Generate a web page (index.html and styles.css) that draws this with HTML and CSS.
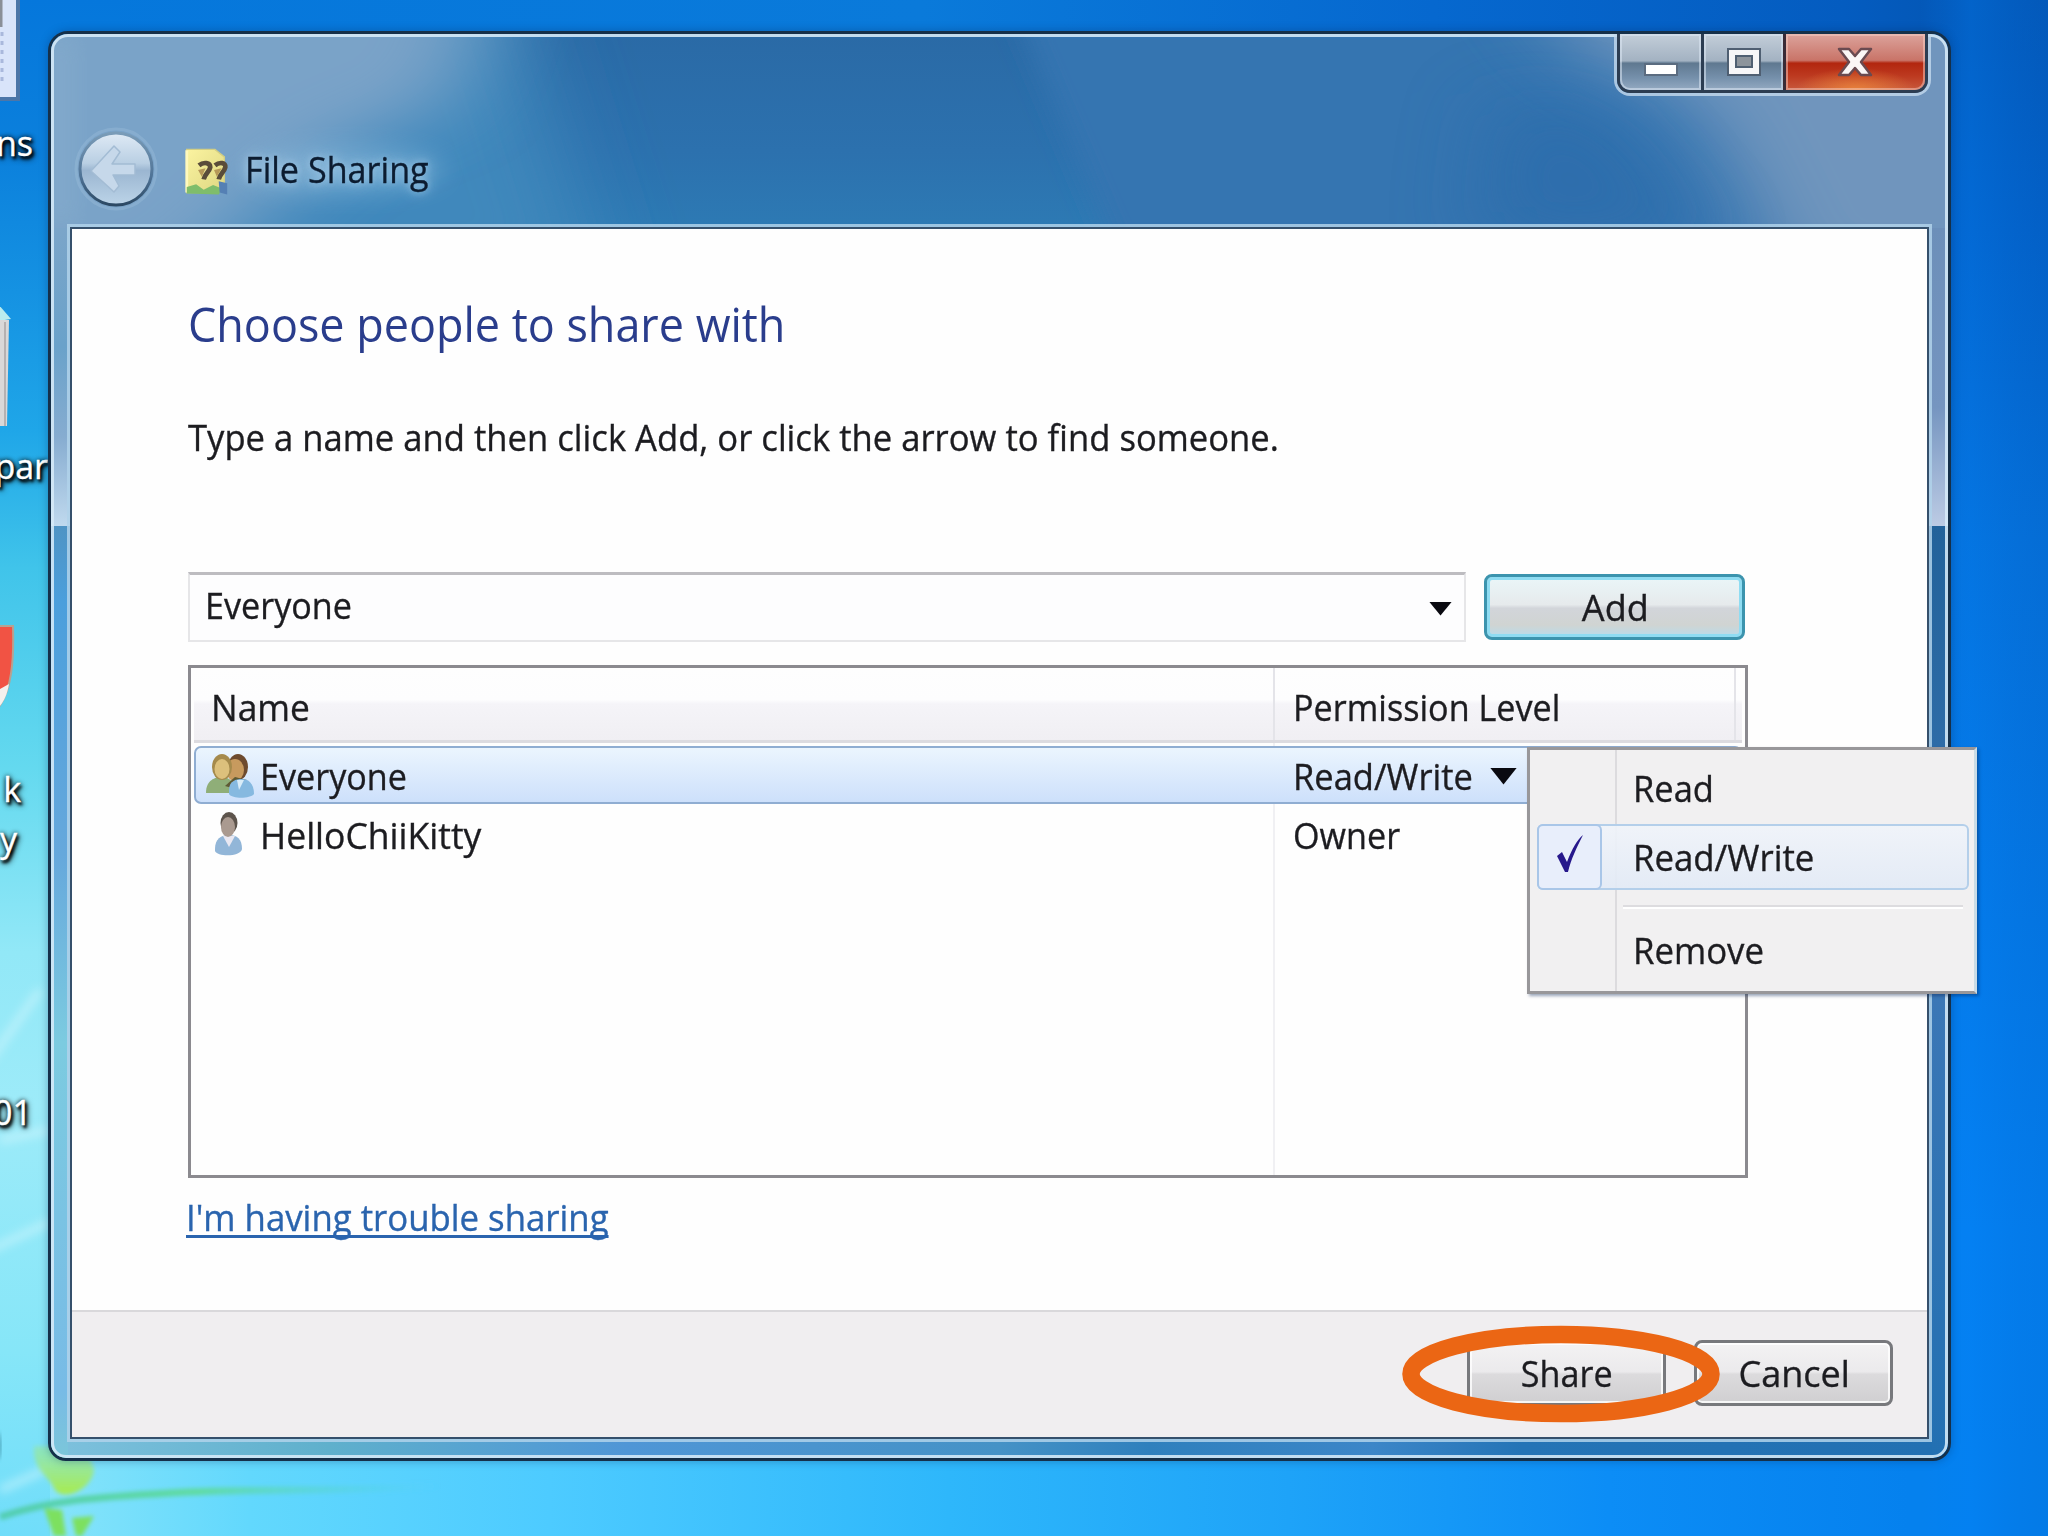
FILE: index.html
```
<!DOCTYPE html>
<html lang="en">
<head>
<meta charset="utf-8">
<title>File Sharing</title>
<link rel="stylesheet" href="styles.css">
</head>
<body>
<div class="desktop">
  <svg class="wallpaper" viewBox="0 0 2048 1536" aria-hidden="true">
    <defs>
      <linearGradient id="left" x1="0" y1="0" x2="0" y2="1">
        <stop offset="0" stop-color="#0577dc"/><stop offset=".1" stop-color="#0b80dc"/>
        <stop offset=".19" stop-color="#1592e2"/><stop offset=".28" stop-color="#1fa6e8"/>
        <stop offset=".37" stop-color="#40c4ea"/><stop offset=".5" stop-color="#64d9ef"/>
        <stop offset=".62" stop-color="#92e8f7"/><stop offset=".72" stop-color="#9debf9"/>
        <stop offset=".88" stop-color="#86e6f8"/><stop offset="1" stop-color="#70ddfa"/>
      </linearGradient>
      <linearGradient id="right" x1="0" y1="0" x2="0" y2="1">
        <stop offset="0" stop-color="#0457b6"/><stop offset=".15" stop-color="#0460c6"/>
        <stop offset=".35" stop-color="#0670d8"/><stop offset=".6" stop-color="#0579e6"/>
        <stop offset=".8" stop-color="#0580f0"/><stop offset="1" stop-color="#0581ee"/>
      </linearGradient>
      <linearGradient id="top" x1="0" y1="0" x2="1" y2="0">
        <stop offset="0" stop-color="#0577dc"/><stop offset=".45" stop-color="#0a7ada"/>
        <stop offset=".7" stop-color="#0668cf"/><stop offset=".9" stop-color="#045cc0"/><stop offset=".95" stop-color="#0457b6"/><stop offset="1" stop-color="#0457b6" stop-opacity="0"/>
      </linearGradient>
      <linearGradient id="bottom" x1="0" y1="0" x2="1" y2="0">
        <stop offset="0" stop-color="#86e4fa"/><stop offset=".1" stop-color="#62d8fd"/>
        <stop offset=".25" stop-color="#4dcbff"/><stop offset=".45" stop-color="#2eb7fb"/>
        <stop offset=".62" stop-color="#1ea3f8"/><stop offset=".78" stop-color="#0c8df6"/>
        <stop offset=".93" stop-color="#0581ee"/><stop offset="1" stop-color="#0581ee"/>
      </linearGradient>
      <linearGradient id="edge" x1="0" y1="0" x2="1" y2="0">
        <stop offset="0" stop-color="#0080f8" stop-opacity="0"/><stop offset=".4" stop-color="#0080f8" stop-opacity=".3"/><stop offset="1" stop-color="#0060c8" stop-opacity=".2"/>
      </linearGradient>
      <linearGradient id="leaf" x1="0" y1="0" x2="0" y2="1">
        <stop offset="0" stop-color="#9be890" stop-opacity=".5"/><stop offset="1" stop-color="#a8ec4c"/>
      </linearGradient>
      <linearGradient id="stem" x1="0" y1="0" x2="1" y2="0">
        <stop offset="0" stop-color="#52cdb0"/><stop offset=".45" stop-color="#5fdba0"/><stop offset="1" stop-color="#50d0e8" stop-opacity="0"/>
      </linearGradient>
      <filter id="soft"><feGaussianBlur stdDeviation="2"/></filter>
      <filter id="softer"><feGaussianBlur stdDeviation="5"/></filter>
    </defs>
    <rect width="2048" height="1536" fill="url(#right)"/>
    <rect width="2048" height="50" fill="url(#top)"/>
    <rect width="120" height="1536" fill="url(#left)"/>
    <rect y="1440" x="50" width="1998" height="96" fill="url(#bottom)"/>
    <rect x="1920" width="128" height="1536" fill="url(#edge)"/>
    <g filter="url(#softer)" fill="none" stroke="#d6f6fd" stroke-opacity=".6">
      <path d="M-10 1250L50 1222M-10 1060L40 990M0 1140L50 1130M0 1490L45 1470" stroke-width="7"/>
    </g>
    <g filter="url(#soft)">
      <path d="M0 1517C50 1500 100 1497 170 1493C260 1488 330 1492 440 1486" fill="none" stroke="url(#stem)" stroke-width="7"/>
      <path d="M34 1446C32 1470 50 1476 55 1490C66 1502 92 1488 94 1470C92 1462 88 1452 82 1446Z" fill="url(#leaf)"/>
      <path d="M44 1508L62 1510L66 1536H54ZM72 1518L94 1516L82 1536H76Z" fill="#7de05e"/>
    </g>
    <!-- desktop icons cut by the left edge -->
    <path d="M-5 -5H18V99H-5Z" fill="#d9e4fa" stroke="#4c76a8" stroke-width="4"/>
    <path d="M0 0V27" stroke="#8a8f98" stroke-width="5"/>
    <path d="M2 32v52" stroke="#a9b8dc" stroke-width="3" stroke-dasharray="4 5"/>
    <path d="M-2 304L11 319L-2 321Z" fill="#b8ecee"/>
    <path d="M-2 320H9L7 426H-2Z" fill="#d9d8d8"/>
    <path d="M5 322V426" stroke="#b5b1b1" stroke-width="2"/>
    <path d="M-2 626H13C14 660 12 690 -2 708Z" fill="#f15344" stroke="#b5a293" stroke-width="2"/>
    <path d="M-2 690L9 684C7 696 3 703 -2 708Z" fill="#f4f1ee"/>
    <ellipse cx="-3" cy="1446" rx="4" ry="14" fill="#3b8ba0" opacity=".7" filter="url(#soft)"/>
  </svg>

  <span class="label label-a">ns</span>
  <span class="label label-b">par</span>
  <span class="label label-c">k</span>
  <span class="label label-d">y</span>
  <span class="label label-e">01</span>

  <section class="window">
    <svg class="glass" viewBox="51 34 1897 1424" preserveAspectRatio="none" aria-hidden="true">
      <defs>
        <linearGradient id="gl" x1="0" y1="0" x2="0" y2="1">
          <stop offset="0" stop-color="#7ba5c9"/><stop offset=".4" stop-color="#6aa2ca"/><stop offset=".7" stop-color="#86acd0"/><stop offset="1" stop-color="#c0d9ee"/>
        </linearGradient>
        <linearGradient id="gl2" x1="0" y1="0" x2="0" y2="1">
          <stop offset="0" stop-color="#4f94c4"/><stop offset=".08" stop-color="#4b9fdc"/><stop offset=".35" stop-color="#66a8dc"/><stop offset=".55" stop-color="#7ccbe0"/><stop offset=".92" stop-color="#78bbe6"/><stop offset="1" stop-color="#7cc8d8"/>
        </linearGradient>
        <linearGradient id="gr" x1="0" y1="0" x2="0" y2="1">
          <stop offset="0" stop-color="#6c8fb9"/><stop offset=".6" stop-color="#7595c0"/><stop offset="1" stop-color="#bccbe4"/>
        </linearGradient>
        <linearGradient id="gr2" x1="0" y1="0" x2="0" y2="1">
          <stop offset="0" stop-color="#22629a"/><stop offset=".5" stop-color="#3b77b6"/><stop offset="1" stop-color="#2270b2"/>
        </linearGradient>
        <linearGradient id="gb" x1="0" y1="0" x2="1" y2="0">
          <stop offset="0" stop-color="#7cc0dc"/><stop offset=".14" stop-color="#5fb0cc"/><stop offset=".3" stop-color="#4f96d6"/><stop offset=".5" stop-color="#4592c6"/><stop offset=".58" stop-color="#2f80bd"/><stop offset=".7" stop-color="#3c86c8"/><stop offset=".78" stop-color="#2474b6"/><stop offset="1" stop-color="#2270b2"/>
        </linearGradient>
        <linearGradient id="gt" x1="0" y1="0" x2="0" y2="1">
          <stop offset="0" stop-color="#2a6aa6"/><stop offset=".6" stop-color="#2c71ae"/><stop offset="1" stop-color="#2d7ab4"/>
        </linearGradient>
        <filter id="b30" x="-50%" y="-50%" width="200%" height="200%"><feGaussianBlur stdDeviation="44 30"/></filter>
        <filter id="b12" x="-50%" y="-50%" width="200%" height="200%"><feGaussianBlur stdDeviation="13"/></filter>
        <clipPath id="cap"><rect x="51" y="34" width="1897" height="196"/></clipPath>
      </defs>
      <rect x="51" y="34" width="1897" height="196" fill="url(#gt)"/>
      <g clip-path="url(#cap)">
        <path d="M1010 0L1120 260H2000V0Z" fill="#3475b1" filter="url(#b12)"/>
        <path d="M-60 -60H490L600 290H-60Z" fill="#3f88bc" filter="url(#b30)"/>
        <path d="M-60 -80H510L450 100L330 150L170 290H-60Z" fill="#7aa3c8" filter="url(#b30)"/>
        <path d="M1500 -60L1580 50L1700 110L1790 290H2150V-60Z" fill="#7095bd" filter="url(#b30)"/>
        <path d="M1500 90L1600 110L1710 240H1480Z" fill="#2767a8" opacity=".5" filter="url(#b30)"/>
        <ellipse cx="345" cy="170" rx="100" ry="22" fill="#a8d0ea" opacity=".35" filter="url(#b12)"/>
        <rect x="48" y="34" width="26" height="196" fill="#8cb2d0" opacity=".5" filter="url(#b12)"/>
      </g>
      <rect x="51" y="228" width="22" height="298" fill="url(#gl)"/>
      <rect x="51" y="526" width="22" height="940" fill="url(#gl2)"/>
      <rect x="1926" y="228" width="22" height="298" fill="url(#gr)"/>
      <rect x="1926" y="526" width="22" height="940" fill="url(#gr2)"/>
      <rect x="68" y="1436" width="1864" height="24" fill="url(#gb)"/>
    </svg>
    <header class="titlebar">
      <svg class="back" viewBox="0 0 84 84" aria-label="Back">
        <defs>
          <linearGradient id="ball" x1="0" y1="0" x2="0" y2="1"><stop offset="0" stop-color="#dfeaf5"/><stop offset=".42" stop-color="#b9cfe3"/><stop offset=".52" stop-color="#9bb6d1"/><stop offset="1" stop-color="#bcd4e8"/></linearGradient>
          <linearGradient id="rim" x1="0" y1="0" x2="0" y2="1"><stop offset="0" stop-color="#7a9cb8"/><stop offset=".6" stop-color="#4f7396"/><stop offset="1" stop-color="#2c4964"/></linearGradient>
        </defs>
        <circle cx="42" cy="42" r="40" fill="none" stroke="#a5c6e0" stroke-opacity=".3" stroke-width="3"/>
        <circle cx="42" cy="42" r="36" fill="url(#ball)" stroke="url(#rim)" stroke-width="3"/>
        <path d="M17 44L40 19L46 25L38 37H61V48H39L45 59L40 65Z" fill="#c6d8ea" stroke="#a3bcd4" stroke-width="1.5" stroke-linejoin="round"/>
      </svg>
      <svg class="folder" viewBox="0 0 50 54" aria-hidden="true">
        <defs><linearGradient id="fo" x1="0" y1="0" x2="1" y2="1"><stop offset="0" stop-color="#fbf3a0"/><stop offset="1" stop-color="#ded782"/></linearGradient></defs>
        <path d="M4 4H34L44 12V44L36 50H4Z" fill="url(#fo)" stroke="#d2ce84" stroke-width="1.5"/>
        <path d="M4 5V50" stroke="#fff9bc" stroke-width="3"/>
        <path d="M4 44L14 41L22 47L32 42L42 46L38 52L4 51Z" fill="#7fbd6b"/>
        <path d="M38 38L47 40V52L39 50Z" fill="#5580b4"/>
        <path d="M17 21C22 17 29 18 29 23C28 28 23 30 22 36M34 21C39 17 46 18 45 23C44 28 39 30 38 36" fill="none" stroke="#5a4c3a" stroke-width="5"/>
        <path d="M16 26L24 24L20 33ZM33 26L41 24L36 33Z" fill="#b69858"/>
      </svg>
      <h1 class="title"><span class="t sx92">File Sharing</span></h1>
      <div class="controls">
        <span class="ctl min"><svg viewBox="0 0 40 36"><rect x="4" y="20" width="32" height="11" fill="#fff" stroke="#5b6c80" stroke-width="2"/></svg></span>
        <span class="ctl max"><svg viewBox="0 0 40 36"><path d="M4 5H36V31H4Z" fill="#f6f6f8" stroke="#4f5f72" stroke-width="2"/><rect x="12" y="12" width="16" height="11" fill="#8d949c" stroke="#4f5f72" stroke-width="2"/></svg></span>
        <span class="ctl close"><svg viewBox="0 0 40 36"><path d="M4 5H14L20 12L26 5H36L26 18L36 31H26L20 24L14 31H4L14 18Z" fill="#fbf6f5" stroke="#6a4a50" stroke-width="2.5" stroke-linejoin="round"/></svg></span>
      </div>
    </header>

    <main class="client">
      <div class="page">
        <h2 class="heading"><span class="t sx95">Choose people to share with</span></h2>
        <p class="hint"><span class="t sx93h">Type a name and then click Add, or click the arrow to find someone.</span></p>
        <div class="entry">
          <div class="combo"><span class="t sx92">Everyone</span><i class="arrow small"></i></div>
          <button class="btn add"><span class="t mid sx97">Add</span></button>
        </div>
        <div class="list">
          <div class="row head"><span class="name"><span class="t sx95">Name</span></span><span class="perm"><span class="t sx92">Permission Level</span></span></div>
          <div class="row selected">
            <svg class="pic" viewBox="0 0 50 50" aria-hidden="true">
              <ellipse cx="33" cy="17" rx="10" ry="13" fill="#6d4a2e"/><ellipse cx="30" cy="20" rx="9" ry="11" fill="#c79a5e"/>
              <path d="M1 43C1 30 10 27 17 27S31 32 31 43Z" fill="#8fae78"/>
              <ellipse cx="17" cy="17" rx="10" ry="13" fill="#a58a4c"/><ellipse cx="17" cy="19" rx="7.500" ry="10" fill="#dcc07c"/>
              <path d="M20 36L30 27L42 30L34 40Z" fill="#5f5a34"/>
              <path d="M24 40C24 31 31 29 37 29S49 33 49 44C45 49 27 49 24 44Z" fill="#86b9e0"/><path d="M32 30L34 40L39 30Z" fill="#d9ecf8"/>
            </svg>
            <span class="name"><span class="t sx92">Everyone</span></span><span class="perm"><span class="t sx93">Read/Write</span></span><i class="arrow"></i>
          </div>
          <div class="row">
            <svg class="pic" viewBox="0 0 50 50" aria-hidden="true">
              <path d="M10 40C10 30 16 26 24 26S37 30 37 40C36 48 12 48 10 42Z" fill="#92b6d8"/>
              <path d="M18 27L24 38L30 27Z" fill="#e9e8f2"/>
              <ellipse cx="24" cy="14" rx="8.500" ry="11" fill="#5d544c"/><ellipse cx="23" cy="18" rx="7" ry="10" fill="#aa9a90"/>
            </svg>
            <span class="name"><span class="t sx96">HelloChiiKitty</span></span><span class="perm"><span class="t sx92">Owner</span></span>
          </div>
        </div>
        <a class="help t sx94">I'm having trouble sharing</a>
      </div>
      <footer class="footer">
        <button class="btn share"><span class="t mid sx92">Share</span></button>
        <button class="btn cancel"><span class="t mid sx97">Cancel</span></button>
      </footer>
    </main>
  </section>

  <ul class="menu">
    <li class="item"><span class="check"></span><span class="t sx93">Read</span></li>
    <li class="item active"><span class="check"><svg viewBox="0 0 40 46"><path d="M7 25L12 21L17 31C22 18 27 9 33 4C27 16 21 28 18 41H15Z" fill="#27188c"/></svg></span><span class="t sx94">Read/Write</span></li>
    <li class="rule"></li>
    <li class="item"><span class="check"></span><span class="t sx94">Remove</span></li>
  </ul>

  <svg class="ring" viewBox="0 0 318 98" aria-hidden="true"><ellipse cx="159" cy="49" rx="150" ry="39.500" fill="none" stroke="#eb6614" stroke-width="17.500"/></svg>
</div>
</body>
</html>
```
FILE: styles.css
```
* { box-sizing: border-box; }

body {
  margin: 0;
  font: 37px/50px "Open Sans", "Noto Sans", sans-serif;
  color: #1c1c20;
  -webkit-text-stroke: .35px currentColor;
}

h1, h2, p, ul { margin: 0; padding: 0; font-weight: 400; }

/* condensed text runs */
.t { display: inline-block; transform-origin: 0 50%; white-space: nowrap; }
.mid { transform-origin: 50% 50%; }
.sx92 { transform: scaleX(.923); }
.sx93 { transform: scaleX(.932); }
.sx93h { transform: scaleX(.936); }
.sx94 { transform: scaleX(.94); }
.sx95 { transform: scaleX(.956); }
.sx96 { transform: scaleX(.96); }
.sx97 { transform: scaleX(.975); }

.desktop {
  position: relative;
  width: 2048px;
  height: 1536px;
  overflow: hidden;
}

.wallpaper { display: block; width: 2048px; height: 1536px; }

/* desktop icon labels */
.label {
  position: absolute;
  right: 2015px;
  font-size: 34px;
  font-weight: 500;
  color: #fff;
  text-shadow: 2px 3px 3px #000, 0 0 5px #000, 2px 3px 6px #000;
}
.label-a { top: 118px; }
.label-b { top: 441px; right: 2000px; }
.label-c { top: 764px; right: 2027px; }
.label-d { top: 814px; right: 2031px; }
.label-e { top: 1087px; right: 2016px; }

/* window frame */
.window {
  position: absolute;
  z-index: 1;
  left: 48px;
  top: 31px;
  width: 1903px;
  height: 1430px;
  display: flex;
  flex-direction: column;
  padding: 0 19px 19px 19px;
  border: 3px solid #15304a;
  border-radius: 20px 20px 18px 18px;
  box-shadow: 0 0 8px rgba(0, 40, 90, .35);
  overflow: hidden;
}
.window::after {
  content: "";
  position: absolute;
  inset: 0;
  border: 3px solid rgba(214, 234, 248, .88);
  border-radius: 17px 17px 15px 15px;
  pointer-events: none;
}

.glass { position: absolute; inset: 0; width: 100%; height: 100%; }

.titlebar {
  position: relative;
  z-index: 1;
  flex: none;
  display: flex;
  align-items: flex-start;
  height: 193px;
}
.back { width: 84px; height: 84px; margin: 93px 0 0 4px; }
.folder { width: 47px; height: 54px; margin: 110px 0 0 25px; }
.title {
  margin: 110px 0 0 15px;
  font-size: 37px;
  color: #0c1c30;
  text-shadow: 0 0 14px rgba(190, 222, 244, .8), 0 0 8px rgba(190, 222, 244, .5);
}

.controls {
  display: flex;
  width: 311px;
  height: 59px;
  margin-left: auto;
  margin-right: 1px;
  border: 3px solid #2c3d52;
  border-top: 0;
  border-radius: 0 0 13px 13px;
  box-shadow: 0 0 0 3px rgba(196, 218, 238, .8);
}
.ctl {
  display: flex;
  justify-content: center;
  width: 82px;
  box-shadow: inset 0 0 0 2px rgba(220, 232, 244, .55);
  background: linear-gradient(#c3ced9 0, #a3b2c2 48%, #5f7890 52%, #7590ab 78%, #94aac2);
}
.ctl svg { width: 40px; height: 36px; margin-top: 10px; }
.min { border-radius: 0 0 0 10px; }
.max { border-left: 3px solid #2c3d52; }
.close {
  width: 143px;
  border-left: 3px solid #3a2a36;
  border-radius: 0 0 10px 0;
  box-shadow: inset 0 0 0 2px rgba(245, 205, 195, .5);
  background: radial-gradient(ellipse 60px 22px at 50% 100%, rgba(240, 140, 60, .8), transparent), linear-gradient(#dca39c 0, #c97468 47%, #b2260f 52%, #bd3a20 75%, #c8583c);
}

/* client area */
.client {
  position: relative;
  z-index: 1;
  flex: 1;
  display: flex;
  flex-direction: column;
  border: 2px solid #35506c;
  box-shadow: 0 0 0 3px rgba(176, 210, 234, .85);
  background: #fefefe;
}
.page { flex: 1; padding: 63px 179px 0 116px; }
.heading {
  font-size: 47px;
  line-height: 64px;
  color: #2a3d8c;
  -webkit-text-stroke: 0;
}
.hint { margin-top: 56px; }

.entry {
  display: flex;
  align-items: center;
  justify-content: space-between;
  height: 70px;
  margin-top: 110px;
  padding-right: 3px;
}
.combo {
  display: flex;
  align-items: center;
  justify-content: space-between;
  width: 1278px;
  height: 70px;
  padding: 0 12px 5px 15px;
  border: 2px solid #e6e6e8;
  border-top: 3px solid #bdbcc0;
  background: #fdfdfe;
}
.arrow {
  width: 27px;
  height: 17px;
  background: #0a0a10;
  clip-path: polygon(0 0, 100% 0, 50% 100%);
}
.arrow.small { width: 23px; height: 14px; margin-top: 7px; }

.btn {
  height: 66px;
  padding: 0;
  border: 3px solid #77787c;
  border-radius: 8px;
  font: inherit;
  color: inherit;
  box-shadow: inset 0 0 0 2px rgba(255, 255, 255, .8);
  background: linear-gradient(#f3f2f3 0, #ebeaec 48%, #dcdbdd 52%, #d0cfd1);
}
.add {
  width: 261px;
  padding-left: 2px;
  border-color: #3c94ae;
  box-shadow: inset 0 0 0 3px #8fdcf2;
  background: linear-gradient(#eaf6f8 0, #e6eaec 46%, #d2d5da 52%, #d0d4d2 80%, #b8dcec);
}

.list {
  height: 513px;
  margin-top: 23px;
  border: 3px solid #8b8a8f;
  background:
    linear-gradient(#f0f0f3, #f0f0f3) 1082px 0 / 2px 100% no-repeat,
    #fefefe;
}
.row {
  display: flex;
  align-items: center;
  height: 60px;
  padding: 2px 0 0 14px;
}
.row .name { width: 1033px; }
.row .pic { width: 50px; height: 50px; margin: -2px 5px 0 0; }
.row:not(.head) .perm { width: 197px; }
.head {
  height: 75px;
  margin: 0 3px;
  padding: 6px 0 0 17px;
  border-bottom: 3px solid #dcdbe0;
  background:
    linear-gradient(#e4e4e9, #e4e4e9) 1079px 0 / 2px 100% no-repeat,
    linear-gradient(#e4e4e9, #e4e4e9) 1540px 0 / 2px 100% no-repeat,
    linear-gradient(#fefefe 0, #fdfdfe 44%, #f5f4f8 50%, #f0eff3);
}
.row.head .name { width: 1082px; }
.row.selected {
  margin: 3px 3px 0;
  height: 58px;
  padding: 2px 0 0 9px;
  border: 2px solid #8fadd2;
  border-radius: 7px;
  background: linear-gradient(#ebf5fe, #cde0fb);
}

.help {
  margin: 14px 0 0 -2px;
  color: #2a64ae;
  text-decoration: underline;
  text-decoration-thickness: 2.500px;
  text-underline-offset: 4px;
  text-decoration-skip-ink: none;
}

.footer {
  display: flex;
  align-items: center;
  justify-content: flex-end;
  gap: 28px;
  height: 127px;
  padding: 0 34px 4px 0;
  border-top: 2px solid #d9d8db;
  background: #f0eef0;
}
.share { width: 199px; }
.cancel { width: 199px; padding-left: 2px; }

/* permission drop-down */
.menu {
  position: absolute;
  z-index: 2;
  left: 1527px;
  top: 747px;
  width: 450px;
  height: 247px;
  padding: 5px 5px 0 7px;
  border: 3px solid #98979a;
  border-right-color: #c9dbe6;
  list-style: none;
  background:
    linear-gradient(#dcdbde, #dcdbde) 85px 0 / 2px 100% no-repeat,
    #f1f0f1;
  box-shadow: 2px 2px 3px rgba(0, 30, 80, .4);
}
.item {
  display: flex;
  align-items: center;
  height: 66px;
  gap: 31px;
}
.item.active {
  margin-top: 3px;
  border-radius: 6px;
  box-shadow: inset 0 0 0 2px #b4cfea;
  background: linear-gradient(rgba(240, 244, 250, .9), rgba(226, 234, 246, .9));
}
.check {
  display: flex;
  align-items: center;
  justify-content: center;
  width: 65px;
  height: 66px;
}
.active .check {
  border: 2px solid #a9c6e8;
  border-radius: 6px;
  background: #e8eefb;
}
.check svg { width: 40px; height: 46px; margin-top: -6px; }
.rule {
  height: 4px;
  margin: 15px 6px 8px 86px;
  border-top: 2px solid #dddcdf;
  border-bottom: 2px solid #fff;
}

.ring {
  position: absolute;
  z-index: 2;
  left: 1402px;
  top: 1325px;
  width: 318px;
  height: 98px;
}
```
